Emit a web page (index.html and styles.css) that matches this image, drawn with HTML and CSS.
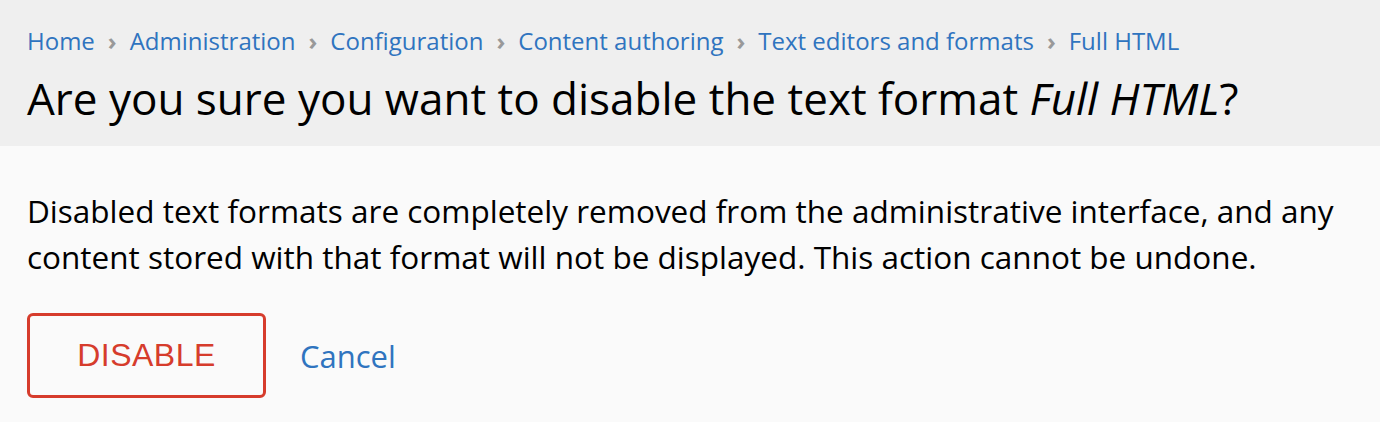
FILE: index.html
```html
<!DOCTYPE html>
<html lang="en">
<head>
    <meta charset="UTF-8">
    <title>Are you sure you want to disable the text format Full HTML?</title>
    <link rel="stylesheet" href="styles.css">
</head>
<body>
    <div class="page-header">
        <nav class="breadcrumb">
            <a href="#">Home</a>
            <span class="sep">&#8250;</span>
            <a href="#">Administration</a>
            <span class="sep">&#8250;</span>
            <a href="#">Configuration</a>
            <span class="sep">&#8250;</span>
            <a href="#">Content authoring</a>
            <span class="sep">&#8250;</span>
            <a href="#">Text editors and formats</a>
            <span class="sep">&#8250;</span>
            <a href="#">Full HTML</a>
        </nav>
        <h1 class="page-title">Are you sure you want to disable the text format <em>Full HTML</em>?</h1>
    </div>

    <main class="content">
        <p class="description">Disabled text formats are completely removed from the administrative interface, and any content stored with that format will not be displayed. This action cannot be undone.</p>
        <div class="actions">
            <button class="button-danger">DISABLE</button>
            <a href="#" class="cancel">Cancel</a>
        </div>
    </main>
</body>
</html>
```

FILE: styles.css
```css
* {
    box-sizing: border-box;
    margin: 0;
    padding: 0;
}

body {
    font-family: "Open Sans", "Noto Sans", sans-serif;
    background: #fafafa;
    color: #000;
}

a {
    color: #2f74bf;
    text-decoration: none;
}

.page-header {
    background: #efefef;
    height: 146px;
    padding: 24px 27px 0;
}

.breadcrumb {
    font-size: 24px;
    line-height: 34px;
    display: flex;
    align-items: center;
    gap: 13px;
}

.breadcrumb .sep {
    color: #999;
    font-weight: bold;
}

.page-title {
    font-size: 44px;
    font-weight: normal;
    line-height: 60px;
    margin-top: 10px;
}

.content {
    padding: 42px 27px 30px;
}

.description {
    font-size: 31.5px;
    line-height: 46px;
}

.actions {
    display: flex;
    align-items: center;
    gap: 34px;
    margin-top: 33px;
}

.button-danger {
    font-family: "Liberation Sans", Arial, sans-serif;
    font-size: 32px;
    letter-spacing: 0.5px;
    color: #d63c2c;
    background: transparent;
    border: 3px solid #d63c2c;
    border-radius: 6px;
    width: 239px;
    height: 85px;
}

.cancel {
    font-size: 31px;
}
```
